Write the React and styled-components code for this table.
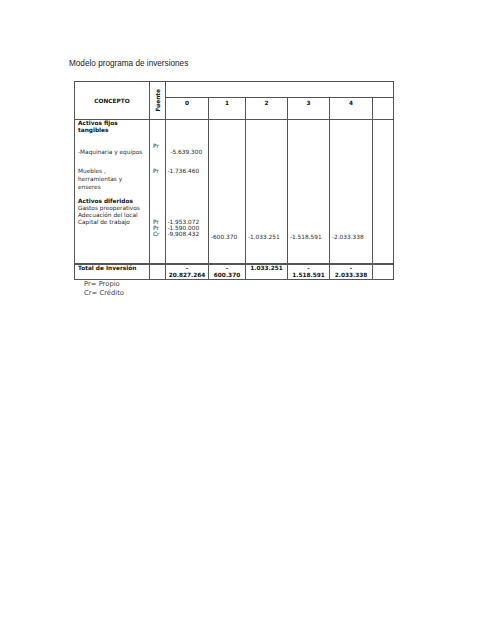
import React from 'react';
import styled, { createGlobalStyle } from 'styled-components';

const GlobalStyle = createGlobalStyle`
  html, body {
    margin: 0;
    padding: 0;
    background: #fff;
  }
`;

const Page = styled.div`
  width: 494px;
  height: 640px;
  padding: 58px 0 0 69px;
  box-sizing: border-box;
  background: #fff;
`;

const Title = styled.h1`
  margin: 0;
  font-family: "Liberation Sans", Arial, sans-serif;
  font-weight: normal;
  font-size: 8.2px;
  line-height: 12px;
  color: #1a1a1a;
`;

const Figure = styled.div`
  margin: 11px 0 0 5px;
  font-family: "DejaVu Sans", Verdana, sans-serif;
`;

const Table = styled.table`
  border-collapse: collapse;
  table-layout: fixed;
  width: 319px;
  font-size: 5.8px;
  color: #2a2a2a;
`;

const Row = styled.tr`
  height: ${p => p.$h}px;
`;

const Cell = styled.td`
  border: 1px solid #555;
  border-top-width: ${p => (p.$heavyTop ? 2 : 1)}px;
  padding: ${p => p.$pad || '0'};
  vertical-align: ${p => p.$valign || 'top'};
  text-align: ${p => p.$align || 'left'};
  font-weight: ${p => (p.$bold ? 'bold' : 'normal')};
  color: ${p => (p.$bold ? '#111' : 'inherit')};
  overflow: hidden;
  white-space: nowrap;
`;

const Vertical = styled.span`
  display: inline-block;
  writing-mode: vertical-rl;
  transform: rotate(180deg);
  font-weight: bold;
  color: #111;
  line-height: 8px;
`;

const Line = styled.div`
  line-height: ${p => p.$lh || 7}px;
  height: ${p => p.$lh || 7}px;
  margin-top: ${p => p.$gap || 0}px;
  padding-left: ${p => p.$indent || 0}px;
  font-weight: ${p => (p.$bold ? 'bold' : 'normal')};
  color: ${p => (p.$bold ? '#111' : 'inherit')};
`;

const Legend = styled.div`
  padding-left: 10px;
  font-size: 6.8px;
  line-height: 9px;
  color: #444;
`;

const widths = [75, 16, 43, 37, 42, 42, 43, 21];

const body = [
  {
    pad: '0 0 0 3px',
    lines: [
      { t: 'Activos fijos', b: true },
      { t: 'tangibles', b: true },
      { t: '-Maquinaria y equipos', gap: 14.5 },
      { t: 'Muebles ,', gap: 12 },
      { t: 'herramientas y', gap: 1 },
      { t: 'enseres', gap: 1 },
      { t: 'Activos diferidos', b: true, gap: 7.5 },
      { t: 'Gastos preoperativos' },
      { t: 'Adecuación del local' },
      { t: 'Capital de trabajo' },
    ],
  },
  {
    pad: '0 0 0 3px',
    lines: [
      { t: 'Pr', gap: 22.5 },
      { t: 'Pr', gap: 18 },
      { t: 'Pr', gap: 44.5, lh: 6 },
      { t: 'Pr', lh: 6 },
      { t: 'Cr', lh: 6 },
    ],
  },
  {
    pad: '0 0 0 1.5px',
    lines: [
      { t: '-5.639.300', gap: 28.5, indent: 3 },
      { t: '-1.736.460', gap: 12 },
      { t: '-1.953.072', gap: 44.5, lh: 6 },
      { t: '-1.590.000', lh: 6 },
      { t: '-9.908.432', lh: 6 },
    ],
  },
  { pad: '0 0 0 2px', lines: [{ t: '-600.370', gap: 113.5 }] },
  { pad: '0 0 0 2px', lines: [{ t: '-1.033.251', gap: 113.5 }] },
  { pad: '0 0 0 2px', lines: [{ t: '-1.518.591', gap: 113.5 }] },
  { pad: '0 0 0 2px', lines: [{ t: '-2.033.338', gap: 113.5 }] },
  { pad: '0', lines: [] },
];

const totals = [
  ['-', '20.827.264'],
  ['-', '600.370'],
  ['1.033.251'],
  ['-', '1.518.591'],
  ['-', '2.033.338'],
];

const App = () => (
  <Page>
    <GlobalStyle />
    <Title>Modelo programa de inversiones</Title>
    <Figure>
      <Table>
        <colgroup>
          {widths.map((w, i) => (
            <col key={i} style={{ width: w }} />
          ))}
        </colgroup>
        <tbody>
          <Row $h={16}>
            <Cell rowSpan={2} $valign="middle" $align="center" $bold>
              CONCEPTO
            </Cell>
            <Cell rowSpan={2} $valign="middle" $align="center">
              <Vertical>Fuente</Vertical>
            </Cell>
            <Cell colSpan={6} />
          </Row>
          <Row $h={22}>
            {['0', '1', '2', '3', '4', ''].map((n, i) => (
              <Cell key={i} $align="center" $bold $pad="2px 0 0">
                {n}
              </Cell>
            ))}
          </Row>
          <Row $h={144}>
            {body.map((col, i) => (
              <Cell key={i} $pad={col.pad}>
                {col.lines.map((l, j) => (
                  <Line key={j} $bold={l.b} $gap={l.gap} $lh={l.lh} $indent={l.indent}>
                    {l.t}
                  </Line>
                ))}
              </Cell>
            ))}
          </Row>
          <Row $h={16}>
            <Cell $heavyTop $pad="0 0 0 3px">
              <Line $bold>Total de Inversión</Line>
            </Cell>
            <Cell $heavyTop />
            {totals.map((v, i) => (
              <Cell key={i} $heavyTop $align="center">
                {v.map((t, j) => (
                  <Line key={j} $bold>
                    {t}
                  </Line>
                ))}
              </Cell>
            ))}
            <Cell $heavyTop />
          </Row>
        </tbody>
      </Table>
      <Legend>
        <div>Pr= Propio</div>
        <div>Cr= Crédito</div>
      </Legend>
    </Figure>
  </Page>
);

export default App;
